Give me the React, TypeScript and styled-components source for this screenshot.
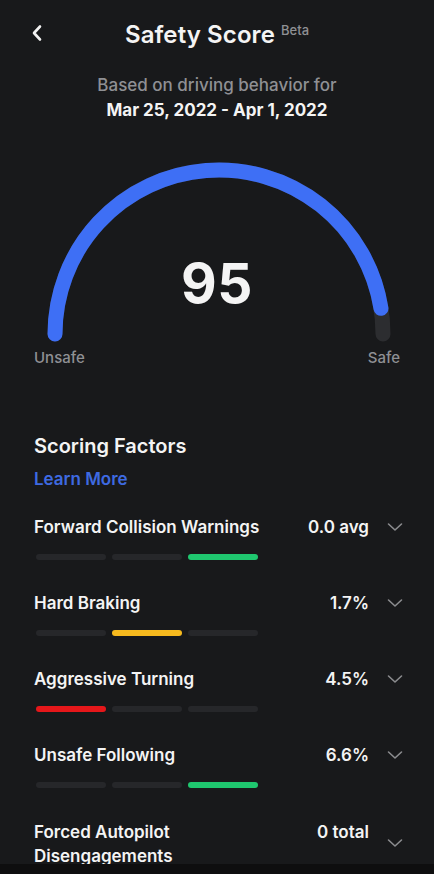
import styled, { createGlobalStyle } from 'styled-components';

const GlobalStyle = createGlobalStyle`
    html, body {
        margin: 0;
        padding: 0;
        background: #18191b;
    }
    * {
        box-sizing: border-box;
    }
`;

interface Factor {
    name: string[];
    value: string;
    level?: number;
    color?: string;
}

const factors: Factor[] = [
    { name: ['Forward Collision Warnings'], value: '0.0 avg', level: 2, color: '#1fc76f' },
    { name: ['Hard Braking'], value: '1.7%', level: 1, color: '#f7ba1e' },
    { name: ['Aggressive Turning'], value: '4.5%', level: 0, color: '#e5171a' },
    { name: ['Unsafe Following'], value: '6.6%', level: 2, color: '#1fc76f' },
    { name: ['Forced Autopilot', 'Disengagements'], value: '0 total' },
];

const BackIcon = () => (
    <svg width="12" height="18" viewBox="0 0 12 18">
        <path d="M9 2.5 L3 9 L9 15.5" fill="none" stroke="#f2f2f2" strokeWidth="2.6" strokeLinecap="round" strokeLinejoin="round" />
    </svg>
);

const ChevronDown = () => (
    <svg width="16" height="10" viewBox="0 0 16 10">
        <path d="M1.5 2 L8 8 L14.5 2" fill="none" stroke="#8b8c8f" strokeWidth="1.6" strokeLinecap="round" strokeLinejoin="round" />
    </svg>
);

const Gauge = ({ score }: { score: number }) => {
    const cx = 184;
    const cy = 172;
    const r = 164;
    const angle = Math.PI - (score / 100) * Math.PI;
    const ex = cx + r * Math.cos(angle);
    const ey = cy - r * Math.sin(angle);
    return (
        <svg width="368" height="182" viewBox="0 0 368 182">
            <path
                d={`M ${cx - r} ${cy} A ${r} ${r} 0 0 1 ${cx + r} ${cy}`}
                fill="none"
                stroke="#2c2d30"
                strokeWidth="15"
                strokeLinecap="round"
            />
            <path
                d={`M ${cx - r} ${cy} A ${r} ${r} 0 0 1 ${ex} ${ey}`}
                fill="none"
                stroke="#3e6ff5"
                strokeWidth="15"
                strokeLinecap="round"
            />
        </svg>
    );
};

const App = () => {
    return (
        <>
            <GlobalStyle />
            <Page>
                <Content>
                    <Header>
                        <BackButton>
                            <BackIcon />
                        </BackButton>
                        <TitleGroup>
                            <Title>Safety Score</Title>
                            <Beta>Beta</Beta>
                        </TitleGroup>
                    </Header>
                    <Subtitle>Based on driving behavior for</Subtitle>
                    <DateRange>Mar 25, 2022 - Apr 1, 2022</DateRange>
                    <GaugeWrap>
                        <Gauge score={95} />
                        <Score>95</Score>
                    </GaugeWrap>
                    <GaugeLabels>
                        <span>Unsafe</span>
                        <span>Safe</span>
                    </GaugeLabels>
                    <Section>
                        <SectionTitle>Scoring Factors</SectionTitle>
                        <LearnMore>Learn More</LearnMore>
                        <FactorList>
                            {factors.map((f) => (
                                <FactorRow key={f.name.join(' ')}>
                                    <FactorHead $multi={f.name.length > 1}>
                                        <FactorName>
                                            {f.name.map((line) => (
                                                <div key={line}>{line}</div>
                                            ))}
                                        </FactorName>
                                        <FactorValue>{f.value}</FactorValue>
                                        <Chevron $multi={f.name.length > 1}>
                                            <ChevronDown />
                                        </Chevron>
                                    </FactorHead>
                                    {f.level !== undefined && (
                                        <Bars>
                                            {[0, 1, 2].map((i) => (
                                                <Bar key={i} $color={i === f.level ? f.color : undefined} />
                                            ))}
                                        </Bars>
                                    )}
                                </FactorRow>
                            ))}
                        </FactorList>
                    </Section>
                </Content>
                <NavBar />
            </Page>
        </>
    );
};

const Page = styled.div`
    height: 874px;
    display: flex;
    flex-direction: column;
    overflow: hidden;
    background: #18191b;
    color: #f4f4f4;
    font-family: Inter, 'Liberation Sans', sans-serif;
`;

const Content = styled.div`
    flex: 1;
    min-height: 0;
    overflow: hidden;
`;

const NavBar = styled.div`
    height: 10px;
    flex-shrink: 0;
    background: #0e0e0f;
`;

const Header = styled.div`
    height: 52px;
    margin-top: 8px;
    display: flex;
    align-items: center;
    justify-content: center;
    position: relative;
`;

const BackButton = styled.div`
    position: absolute;
    left: 31px;
    top: 16px;
    display: flex;
`;

const TitleGroup = styled.div`
    display: flex;
    align-items: flex-start;
    gap: 6px;
`;

const Title = styled.h1`
    margin: 0;
    font-size: 24px;
    font-weight: 600;
    letter-spacing: 0.1px;
`;

const Beta = styled.span`
    font-size: 13px;
    color: #8f9094;
    font-weight: 500;
    margin-top: 2px;
`;

const Subtitle = styled.div`
    margin-top: 15px;
    text-align: center;
    font-size: 17px;
    color: #8f9094;
    font-weight: 500;
`;

const DateRange = styled.div`
    margin-top: 5px;
    text-align: center;
    font-size: 17px;
    font-weight: 700;
`;

const GaugeWrap = styled.div`
    margin-top: 42px;
    display: flex;
    justify-content: center;
    padding-left: 4px;
    position: relative;
`;

const Score = styled.div`
    position: absolute;
    left: 0;
    right: 0;
    top: 88px;
    text-align: center;
    font-size: 55px;
    font-weight: 700;
    letter-spacing: 0.5px;
`;

const GaugeLabels = styled.div`
    display: flex;
    justify-content: space-between;
    padding: 0 34px;
    margin-top: 4px;
    font-size: 15px;
    color: #8f9094;
    font-weight: 500;
`;

const Section = styled.div`
    padding: 0 34px;
    margin-top: 67px;
`;

const SectionTitle = styled.h2`
    margin: 0;
    font-size: 20px;
    font-weight: 600;
`;

const LearnMore = styled.div`
    margin-top: 11px;
    font-size: 17px;
    font-weight: 600;
    color: #3e6ae1;
`;

const FactorList = styled.div`
    margin-top: 27px;
    display: flex;
    flex-direction: column;
    gap: 32px;
`;

const FactorRow = styled.div`
    display: flex;
    flex-direction: column;
    gap: 16px;
`;

const FactorHead = styled.div<{ $multi: boolean }>`
    display: flex;
    align-items: flex-start;
    font-size: 17px;
    font-weight: 600;
    line-height: ${(p) => (p.$multi ? '24px' : '22px')};
`;

const FactorName = styled.div`
    flex: 1;
`;

const FactorValue = styled.div`
    font-weight: 600;
`;

const Chevron = styled.div<{ $multi: boolean }>`
    width: 34px;
    display: flex;
    justify-content: flex-end;
    padding-top: ${(p) => (p.$multi ? '18px' : '6px')};
    margin-right: -3px;
`;

const Bars = styled.div`
    display: flex;
    gap: 6px;
    padding-left: 2px;
`;

const Bar = styled.div<{ $color?: string }>`
    width: 70px;
    height: 6px;
    border-radius: 3px;
    background: ${(p) => p.$color ?? '#26272a'};
`;

export default App;
